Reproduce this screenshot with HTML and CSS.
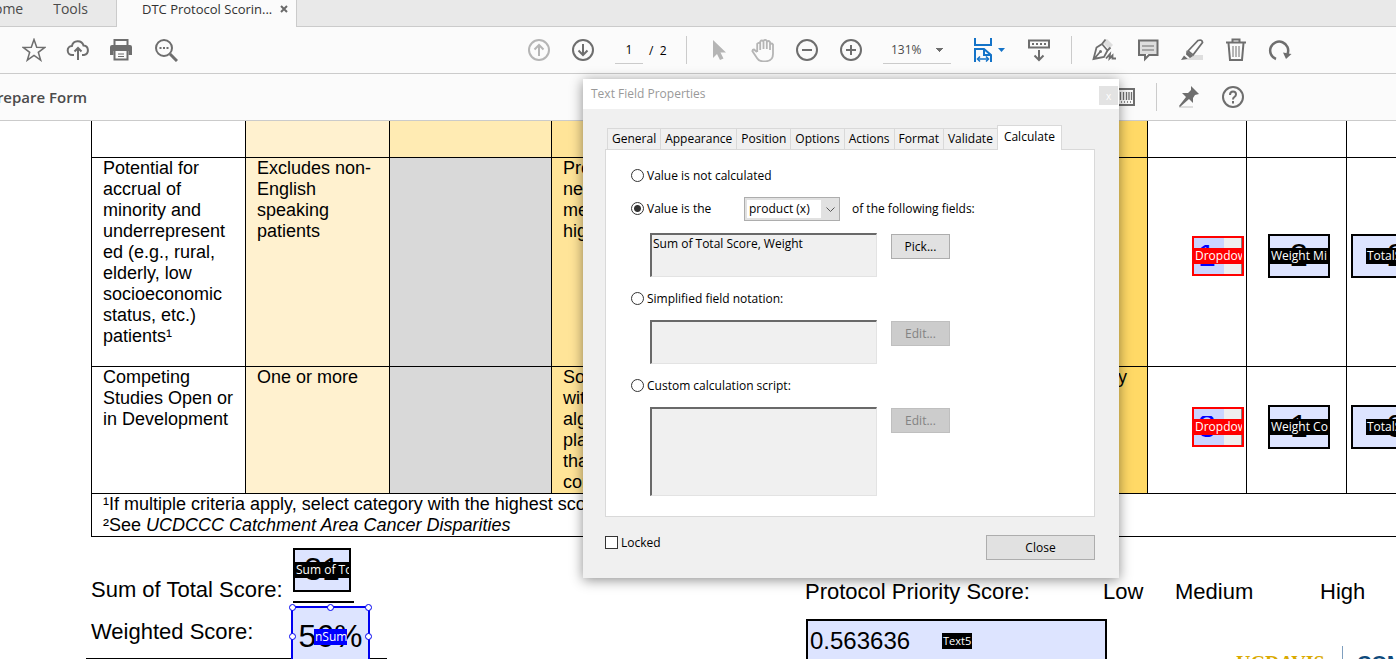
FILE: index.html
```html
<!DOCTYPE html>
<html lang="en">
<head>
  <meta charset="UTF-8">
  <meta name="viewport" content="width=device-width, initial-scale=1.0">
  <title>DTC Protocol Scoring</title>
  <link rel="stylesheet" href="styles.css">
</head>
<body>
  <header class="tab-bar">
    <nav class="main-nav">
      <a href="#">Home</a>
      <a href="#">Tools</a>
    </nav>
    <div class="doc-tab">
      <span>DTC Protocol Scorin...</span>
      <button class="tab-close" aria-label="Close tab">
        <svg width="8" height="8" viewBox="0 0 8 8"><path d="M1 1l6 6M7 1L1 7" stroke="#6a6a6a" stroke-width="2"/></svg>
      </button>
    </div>
    <div class="tab-rest"></div>
  </header>

  <div class="toolbar">
    <div class="tool-group">
      <button class="tool" aria-label="Star">
        <svg class="icon" viewBox="0 0 24 24"><path d="M12 1.5l2.7 7.7 8.1.2-6.5 4.9 2.4 7.9-6.7-4.7-6.7 4.7 2.4-7.9-6.5-4.9 8.1-.2z"/></svg>
      </button>
      <button class="tool" aria-label="Upload">
        <svg class="icon thick" viewBox="0 0 24 24"><path d="M8 17H6.500a4.500 4.500 0 0 1-.6-9A6 6 0 0 1 17.500 7.500 4.800 4.800 0 0 1 18 17h-2M12 22V10M8.500 13.500L12 10l3.500 3.500"/></svg>
      </button>
      <button class="tool" aria-label="Print">
        <svg class="icon" viewBox="0 0 24 24"><path d="M4.500 7V2h13v5" stroke-width="2"/><path class="solid" d="M0 9q0-2 2-2h18q2 0 2 2v8h-3.500v-4h-15v4H0z"/><path d="M4.500 13v8.500h13V13" stroke-width="2"/><path d="M8 16h6M8 18.500h6" stroke-width="1"/></svg>
      </button>
      <button class="tool" aria-label="Find">
        <svg class="icon thick" viewBox="0 0 24 24"><circle cx="10" cy="10" r="8"/><path d="M16 16l7 7" stroke-width="3"/><path d="M5.500 10h2M9 10h2M12.500 10h2"/></svg>
      </button>
    </div>

    <div class="tool-group">
      <button class="tool" aria-label="Previous page" disabled>
        <svg class="icon thick" viewBox="0 0 24 24"><circle cx="12" cy="12" r="10"/><path d="M12 18V7M7.500 11.500L12 7l4.500 4.500"/></svg>
      </button>
      <button class="tool" aria-label="Next page">
        <svg class="icon thick" viewBox="0 0 24 24"><circle cx="12" cy="12" r="10"/><path d="M12 6v11M7.500 12.500L12 17l4.500-4.500"/></svg>
      </button>
      <input class="page-input" type="text" value="1" aria-label="Page number">
      <span class="page-count">/&nbsp; 2</span>
      <span class="divider"></span>
      <button class="tool" aria-label="Select" disabled>
        <svg class="icon" viewBox="0 0 24 24"><path class="solid" d="M6 2v18l4-4 3 6 3.500-1.500-3-6H19z"/></svg>
      </button>
      <button class="tool" aria-label="Hand" disabled>
        <svg class="icon" viewBox="0 0 24 24"><path stroke-width="1.800" d="M6 14L3 11.500Q1.500 11.500 1.300 13l5 7.500Q8 23.300 12 23.300h2.500Q22 23 22 16V6.500q-1.500-2-3 0V11M19 12V4q-1.600-2-3.200 0v7M15.800 11V2.800q-1.700-2-3.300 0V11M12.500 11V3.500q-1.700-2-3.300 0V12M9.200 5.500Q7.600 4 6.200 5.800V14"/></svg>
      </button>
      <button class="tool" aria-label="Zoom out">
        <svg class="icon thick" viewBox="0 0 24 24"><circle cx="12" cy="12" r="10"/><path d="M7 12h10"/></svg>
      </button>
      <button class="tool" aria-label="Zoom in">
        <svg class="icon thick" viewBox="0 0 24 24"><circle cx="12" cy="12" r="10"/><path d="M7 12h10M12 7v10"/></svg>
      </button>
      <select class="zoom-select" aria-label="Zoom level">
        <option>131%</option>
      </select>
      <button class="tool fit" aria-label="Fit width">
        <svg width="32" height="26" viewBox="0 0 32 26"><g fill="none" stroke="#1473c8" stroke-width="2"><path d="M2 1v7h16V1M2 25V12h9l7 6v7M11 12v6h7"/><path d="M5 22h10" stroke-width="1.500"/><path d="M7 19.500L4.500 22 7 24.500M13 19.500l2.500 2.500-2.500 2.500" stroke-width="1.500"/></g><path d="M25 11h7l-3.500 4z" fill="#1473c8"/></svg>
      </button>
      <button class="tool" aria-label="Scrolling">
        <svg class="icon thick" viewBox="0 0 24 24"><path d="M2 2.500h20v7H2zM12 12v10M7.500 17.500L12 22l4.500-4.500"/><path d="M5 6h2M9 6h2M13 6h2M17 6h2"/></svg>
      </button>
      <span class="divider"></span>
      <button class="tool" aria-label="Sign">
        <svg class="icon" viewBox="0 0 24 24"><path class="pale" d="M13 2l2-1 6 6-4 4-5-5z"/><path stroke-width="1.800" d="M13.500 1.500L10 6 4.500 9.500 1.500 21 12 19l3.500-6.500L10 6M2 21l6-7M15.500 12.500l3-3"/><circle class="solid" cx="8.500" cy="13.500" r="1.500"/><path stroke-width="1.800" d="M14 20.500l4-4.500-.5 4.500 3-3v3H24"/></svg>
      </button>
      <button class="tool" aria-label="Comment">
        <svg class="icon thick" viewBox="0 0 24 24"><path class="pale" d="M3 3h18v13H3z"/><path d="M3 2.500h18.500V17H13l-4 4v-4H3z"/><path d="M6 8h12M6 12h12" stroke-width="1"/></svg>
      </button>
      <button class="tool" aria-label="Highlight">
        <svg class="icon" viewBox="0 0 24 24"><path class="pale" d="M11 17h12v5H7z"/><path stroke-width="1.800" d="M8 13L18 2.500q4-1.500 4.500 2L13 17z"/><path class="solid" d="M6.500 12.500l6.500 5.500-3 2-4-3.500zM4 17.500l4 3.500-7 1z"/></svg>
      </button>
      <button class="tool" aria-label="Delete">
        <svg class="icon thick" viewBox="0 0 24 24"><path d="M2 4.500h20M8.500 4V1.500h7V4M4.500 5l1.500 17h12l1.500-17"/><path d="M9 8v11M12 8v11M15 8v11" stroke-width="1"/></svg>
      </button>
      <button class="tool" aria-label="Rotate">
        <svg class="icon" viewBox="0 0 24 24"><path stroke-width="2.500" d="M8 21A9 9 0 1 1 19.500 16"/><path class="solid" d="M15 14.500l8.500 1.500-5.500 5z"/></svg>
      </button>
    </div>
  </div>

  <div class="sub-bar">
    <h1 class="mode-title">Prepare Form</h1>
    <div class="tool-group">
      <button class="tool" aria-label="Barcode">
        <svg class="icon thick" viewBox="0 0 24 24"><path d="M1 4h21v16H1z"/><path d="M6 7v8M8.500 7v8M11.500 7v8M14.500 7v8M17 7v8M19.500 7v8M6 17h1M9 17h1M12 17h1M15 17h1M18 17h1" stroke-width="1.300"/></svg>
      </button>
      <span class="divider"></span>
      <button class="tool" aria-label="Pin">
        <svg class="icon" viewBox="0 0 24 24"><path class="pale" d="M2 21h14v2H2z"/><path class="solid" d="M14 1l8 8-4 1-2 3v5l-4-4-9 8-1-1 7-9-4-4h6l3-3z"/></svg>
      </button>
      <button class="tool" aria-label="Help">
        <svg class="icon thick" viewBox="0 0 24 24"><circle cx="12" cy="12" r="10"/><path d="M9 10q0-3.500 3-3.500t3 2.800q0 1.700-1.500 2.500T12 14.500M12 16v2.500"/></svg>
      </button>
    </div>
  </div>

  <main class="page">
    <table class="score-table">
      <colgroup>
        <col class="col-name"><col class="col-a"><col class="col-b"><col class="col-c"><col class="col-d"><col class="col-score"><col class="col-num"><col class="col-num">
      </colgroup>
      <tbody>
        <tr class="row-prev">
          <td></td>
          <td class="tint-1"></td>
          <td class="tint-2"></td>
          <td class="tint-3"></td>
          <td class="tint-4"></td>
          <td></td>
          <td></td>
          <td></td>
        </tr>
        <tr class="row-accrual">
          <td>Potential for<br>accrual of<br>minority and<br>underrepresent<br>ed (e.g., rural,<br>elderly, low<br>socioeconomic<br>status, etc.)<br>patients¹</td>
          <td class="tint-1">Excludes non-<br>English<br>speaking<br>patients</td>
          <td class="blank"></td>
          <td class="tint-3">Protocol<br>needs<br>met for<br>high</td>
          <td class="tint-4"></td>
          <td class="field-cell">
            <div class="field dropdown">
              <select aria-label="Dropdown minority"><option>1</option></select>
              <span class="tag">Dropdow</span>
            </div>
          </td>
          <td class="field-cell">
            <div class="field">
              <input type="text" value="2" aria-label="Weight Minority">
              <span class="tag">Weight Mi</span>
            </div>
          </td>
          <td class="field-cell">
            <div class="field total">
              <input type="text" value="2" aria-label="Total score minority">
              <span class="tag">TotalSc</span>
            </div>
          </td>
        </tr>
        <tr class="row-competing">
          <td>Competing<br>Studies Open or<br>in Development</td>
          <td class="tint-1">One or more</td>
          <td class="blank"></td>
          <td class="tint-3">Some<br>with<br>algorithm<br>plan<br>that<br>compete</td>
          <td class="tint-4 align-end">No competing study</td>
          <td class="field-cell">
            <div class="field dropdown">
              <select aria-label="Dropdown competing"><option>3</option></select>
              <span class="tag">Dropdow</span>
            </div>
          </td>
          <td class="field-cell">
            <div class="field">
              <input type="text" value="1" aria-label="Weight Competing">
              <span class="tag">Weight Co</span>
            </div>
          </td>
          <td class="field-cell">
            <div class="field total">
              <input type="text" value="3" aria-label="Total score competing">
              <span class="tag">TotalSc</span>
            </div>
          </td>
        </tr>
        <tr class="row-notes">
          <td colspan="8">¹If multiple criteria apply, select category with the highest score<br>²See <em>UCDCCC Catchment Area Cancer Disparities</em></td>
        </tr>
      </tbody>
    </table>

    <section class="summary">
      <div class="totals">
        <div class="total-row">
          <label for="sum-total">Sum of Total Score:</label>
          <div class="underline">
            <div class="field sum">
              <input type="text" id="sum-total" value="31">
              <span class="tag">Sum of To</span>
            </div>
          </div>
        </div>
        <div class="total-row weighted">
          <label for="weighted">Weighted Score:</label>
          <div class="field selected">
            <input type="text" id="weighted" value="56%">
            <span class="tag">nSum</span>
            <i class="handle tl"></i><i class="handle tc"></i><i class="handle tr"></i>
            <i class="handle ml"></i><i class="handle mr"></i>
          </div>
        </div>
      </div>

      <div class="priority">
        <div class="levels">
          <label for="priority">Protocol Priority Score:</label>
          <span class="low">Low</span>
          <span class="medium">Medium</span>
          <span>High</span>
        </div>
        <div class="priority-foot">
          <div class="field score">
            <input type="text" id="priority" value="0.563636">
            <span class="tag">Text5</span>
          </div>
          <div class="brand">
            <span class="brand-gold">UCDAVIS</span>
            <span class="brand-navy">COMPREHENSIVE</span>
          </div>
        </div>
      </div>
    </section>
  </main>

  <div class="dialog" role="dialog" aria-labelledby="dialog-title">
    <div class="dialog-head">
      <h2 id="dialog-title">Text Field Properties</h2>
      <button class="dialog-x" aria-label="Close dialog">x</button>
    </div>
    <div class="dialog-body">
      <div class="tabs" role="tablist">
        <button role="tab">General</button>
        <button role="tab">Appearance</button>
        <button role="tab">Position</button>
        <button role="tab">Options</button>
        <button role="tab">Actions</button>
        <button role="tab">Format</button>
        <button role="tab">Validate</button>
        <button role="tab" class="active" aria-selected="true">Calculate</button>
      </div>
      <div class="panel">
        <div class="option">
          <input type="radio" name="calc" id="calc-none">
          <label for="calc-none">Value is not calculated</label>
        </div>
        <div class="option">
          <input type="radio" name="calc" id="calc-value" checked>
          <label for="calc-value" class="value-label">Value is the</label>
          <div class="combo">
            <select id="operation">
              <option>product (x)</option>
            </select>
            <svg class="chevron" viewBox="0 0 9 6"><path d="M.5.5l4 4 4-4" fill="none" stroke="#555"/></svg>
          </div>
          <label for="operation">of the following fields:</label>
        </div>
        <div class="entry">
          <textarea aria-label="Fields" readonly>Sum of Total Score, Weight</textarea>
          <button class="btn">Pick...</button>
        </div>
        <div class="option">
          <input type="radio" name="calc" id="calc-simple">
          <label for="calc-simple">Simplified field notation:</label>
        </div>
        <div class="entry">
          <textarea aria-label="Simplified field notation" readonly></textarea>
          <button class="btn" disabled>Edit...</button>
        </div>
        <div class="option">
          <input type="radio" name="calc" id="calc-custom">
          <label for="calc-custom">Custom calculation script:</label>
        </div>
        <div class="entry script">
          <textarea aria-label="Custom calculation script" readonly></textarea>
          <button class="btn" disabled>Edit...</button>
        </div>
      </div>
      <div class="dialog-foot">
        <div class="locked">
          <input type="checkbox" id="locked">
          <label for="locked">Locked</label>
        </div>
        <button class="btn btn-close">Close</button>
      </div>
    </div>
  </div>
</body>
</html>
```
FILE: styles.css
```css
* {
  margin: 0;
  padding: 0;
  box-sizing: border-box;
}

body {
  height: 100vh;
  overflow: hidden;
  display: flex;
  flex-direction: column;
  position: relative;
  background: #fff;
  color: #000;
  font-family: "Open Sans", "Noto Sans", sans-serif;
  font-size: 12px;
}

button,
input,
select,
textarea {
  font: inherit;
  color: inherit;
  border: none;
  border-radius: 0;
  background: none;
  appearance: none;
  outline: none;
}

/* top tabs */
.tab-bar {
  display: flex;
  height: 27px;
  flex: none;
  font-size: 14px;
  color: #4b4b4b;
}

.main-nav {
  display: flex;
  justify-content: flex-end;
  gap: 30px;
  width: 116px;
  padding-right: 28px;
  overflow: hidden;
  background: #e9e9e9;
  border-bottom: 1px solid #cbcbcb;
}

.main-nav a {
  color: inherit;
  text-decoration: none;
  line-height: 18px;
}

.doc-tab {
  display: flex;
  justify-content: space-between;
  width: 181px;
  padding: 0 8px 0 25px;
  background: #fbfbfb;
  border-left: 1px solid #cbcbcb;
  border-right: 1px solid #cbcbcb;
  color: #323232;
  font-size: 13px;
  line-height: 18px;
  white-space: nowrap;
}

.tab-close {
  display: flex;
  align-items: center;
  height: 18px;
}

.tab-rest {
  flex: 1;
  background: #e9e9e9;
  border-bottom: 1px solid #cbcbcb;
}

/* toolbars */
.toolbar,
.sub-bar {
  display: flex;
  justify-content: space-between;
  align-items: center;
  height: 47px;
  flex: none;
  background: #fbfbfb;
  border-bottom: 1px solid #cbcbcb;
}

.toolbar {
  padding: 0 94px 0 12px;
}

.sub-bar {
  padding-right: 141px;
}

.tool-group {
  display: flex;
  align-items: center;
}

.tool {
  display: flex;
  align-items: center;
  justify-content: center;
  width: 44px;
  height: 44px;
  color: #6e6e6e;
}

.tool:disabled {
  color: #b5b5b5;
}

.icon {
  width: 24px;
  height: 24px;
  fill: none;
  stroke: currentColor;
  stroke-width: 1.5;
}

.icon.thick {
  stroke-width: 2;
}

.icon .solid {
  fill: currentColor;
  stroke: none;
}

.icon .pale {
  fill: #dedede;
  stroke: none;
}

.page-input {
  width: 28px;
  height: 28px;
  margin: 0 6px 0 10px;
  border-bottom: 1px solid #cbcbcb;
  text-align: center;
}

.page-count {
  width: 18px;
  white-space: nowrap;
}

.divider {
  width: 1px;
  height: 28px;
  margin: 0 10px;
  background: #cbcbcb;
}

.page-count + .divider {
  margin-left: 19px;
}

.zoom-select {
  width: 68px;
  height: 28px;
  margin: 0 10px;
  padding-left: 8px;
  color: #4b4b4b;
  border-bottom: 1px solid #cbcbcb;
  background: conic-gradient(from -45deg at 50% 100%, #6e6e6e 90deg, transparent 0) 52px 12px / 8px 4px no-repeat;
}

.tool.fit {
  width: 56px;
}

.mode-title {
  display: flex;
  justify-content: flex-end;
  width: 87px;
  font-size: 15px;
  font-weight: 600;
  color: #4b4b4b;
  white-space: nowrap;
}

/* document */
.page {
  flex: 1;
  min-height: 0;
  overflow: hidden;
  padding-left: 91px;
  font-family: "Liberation Sans", Arial, sans-serif;
}

.score-table {
  width: 1355px;
  table-layout: fixed;
  border-collapse: collapse;
  font-size: 18px;
  line-height: 21px;
}

.col-name { width: 154px; }
.col-a { width: 144px; }
.col-b { width: 162px; }
.col-c { width: 299px; }
.col-d { width: 297px; }
.col-score { width: 99px; }
.col-num { width: 100px; }

.score-table td {
  border: 1px solid #000;
  border-top: none;
  padding: 0 11px;
  vertical-align: top;
  white-space: nowrap;
}

.tint-1 { background: #fff1cf; }
.tint-2 { background: #ffebb3; }
.tint-3 { background: #ffe498; }
.tint-4 { background: #ffd966; }
.blank { background: #d9d9d9; }

.score-table .align-end {
  padding-right: 20px;
  text-align: right;
}

.row-prev { height: 36px; }
.row-accrual { height: 209px; }
.row-competing { height: 125px; }
.row-notes { height: 43px; }

.score-table .field-cell {
  padding: 0 15px 12px 21px;
  vertical-align: middle;
}

.row-competing .field-cell {
  padding-bottom: 6px;
}

/* form fields with their name tags */
.field {
  position: relative;
  width: 62px;
  height: 44px;
  border: 2px solid #000;
  background: #dde4ff;
}

.field input,
.field select {
  display: block;
  width: 100%;
  height: 100%;
  font-family: "Liberation Sans", Arial, sans-serif;
  font-size: 32px;
  text-align: center;
}

.tag {
  position: absolute;
  top: 12px;
  left: 0;
  right: 0;
  height: 16px;
  padding-left: 1px;
  overflow: hidden;
  background: #000;
  color: #fff;
  font-family: "Open Sans", "Noto Sans", sans-serif;
  font-size: 12px;
  line-height: 16px;
  white-space: nowrap;
}

.field.dropdown {
  width: 52px;
  height: 40px;
  margin-left: 23px;
  border-color: #f00;
  background: #cad5ff;
}

.dropdown select {
  padding-left: 4px;
  color: #00f;
  text-align: left;
  background: linear-gradient(#efefef, #efefef) right / 17px 100% no-repeat;
  border-right: 1px solid #808080;
}

.dropdown .tag {
  top: 10px;
  background: #f00;
}

.field.total {
  width: 90px;
  margin-left: -17px;
}

.total .tag {
  left: 13px;
  right: 13px;
}

/* totals under the table */
.summary {
  display: flex;
  justify-content: space-between;
  font-size: 22px;
  line-height: 26px;
}

.totals {
  width: 301px;
  margin-left: -5px;
  padding-top: 11px;
}

.total-row {
  display: flex;
  justify-content: space-between;
  height: 55px;
  padding: 0 33px 0 5px;
}

.total-row label {
  align-self: flex-end;
}

.underline {
  width: 61px;
  border-bottom: 2px solid #000;
}

.field.sum {
  width: 58px;
}

.total-row.weighted {
  height: 54px;
  margin-top: 3px;
  padding-right: 17px;
  border-bottom: 2px solid #000;
}

.weighted label {
  align-self: center;
}

.field.selected {
  width: 79px;
  height: 62px;
  border-color: #0000f0;
}

.selected .tag {
  top: 21px;
  left: 21px;
  right: 21px;
  background: #00f;
}

.handle {
  position: absolute;
  width: 7px;
  height: 7px;
  border: 1px solid #0000f0;
  border-radius: 50%;
  background: #fff;
}

.tl { top: -4px; left: -4px; }
.tc { top: -4px; left: 34px; }
.tr { top: -4px; right: -4px; }
.ml { top: 25px; left: -4px; }
.mr { top: 25px; right: -4px; }

.priority {
  width: 591px;
  padding-top: 42px;
}

.levels {
  display: flex;
}

.levels > * {
  flex: none;
}

.levels label {
  width: 298px;
}

.low {
  width: 72px;
}

.medium {
  width: 145px;
}

.priority-foot {
  display: flex;
  gap: 129px;
  margin-top: 14px;
  padding-left: 1px;
}

.field.score {
  width: 301px;
  flex: none;
}

.score input {
  padding-left: 2px;
  font-size: 24px;
  text-align: left;
}

.score .tag {
  left: 134px;
  right: auto;
  padding: 0 1px;
  font-size: 11px;
}

.brand {
  display: flex;
  margin-top: 27px;
  font-size: 20px;
  font-weight: 700;
  line-height: 34px;
}

.brand-gold {
  width: 107px;
  flex: none;
  border-right: 1px solid #7f9fbf;
  color: #daaa00;
  font-family: "Liberation Serif", "Times New Roman", serif;
}

.brand-navy {
  padding-left: 14px;
  color: #0f4a7c;
}

/* dialog */
.dialog {
  position: absolute;
  top: 79px;
  left: 583px;
  width: 536px;
  background: #f0f0f0;
  box-shadow: 0 2px 12px rgba(0, 0, 0, 0.45);
}

.dialog-head {
  display: flex;
  justify-content: space-between;
  align-items: center;
  height: 30px;
  padding: 0 1px 0 8px;
  background: #fff;
}

.dialog-head h2 {
  padding-bottom: 1px;
  font-size: 12px;
  font-weight: 400;
  color: #999;
}

.dialog-x {
  width: 19px;
  height: 19px;
  margin-top: 3px;
  background: #e3e3e3;
  color: #fff;
  font-size: 10px;
}

.dialog-body {
  padding: 16px 24px 18px 22px;
}

.tabs {
  display: flex;
  align-items: flex-end;
  padding-left: 2px;
}

.tabs button {
  height: 21px;
  padding: 0 4px;
  border: 1px solid #d9d9d9;
  border-width: 1px 0 0 1px;
  line-height: 18px;
}

.tabs .active {
  position: relative;
  height: 25px;
  margin-bottom: -1px;
  padding: 0 6px 3px;
  border-right-width: 1px;
  background: #fff;
}

.panel {
  padding: 14px 25px 20px;
  border: 1px solid #d9d9d9;
  background: #fff;
}

.option {
  display: flex;
  align-items: center;
  height: 24px;
}

.option + .option {
  margin-top: 9px;
}

.option label {
  padding-bottom: 2px;
}

.option input,
.locked input {
  width: 13px;
  height: 13px;
  margin: 0 3px 2px 0;
  border: 1px solid #333;
  background: #fff;
}

.option input {
  border-radius: 50%;
}

.option input:checked {
  background: radial-gradient(#333 0 3px, #fff 4px);
}

.locked label {
  padding-bottom: 2px;
}

.value-label {
  width: 97px;
}

.combo {
  position: relative;
  width: 96px;
  height: 24px;
  margin-right: 12px;
}

.combo select {
  width: 100%;
  height: 100%;
  padding: 0 0 2px 4px;
  border: 1px solid #adadad;
  background: linear-gradient(#fff, #fff) 2px 2px / 74px 18px no-repeat, #e1e1e1;
}

.chevron {
  position: absolute;
  top: 10px;
  right: 5px;
  width: 9px;
  height: 6px;
  pointer-events: none;
}

.entry {
  display: flex;
  align-items: flex-start;
  gap: 14px;
  margin: 9px 0 10px 19px;
}

.option + .option + .entry {
  margin-top: 12px;
}

.entry.script {
  margin-bottom: 0;
}

.entry textarea {
  width: 227px;
  height: 44px;
  padding: 1px;
  border: 1px solid #e3e3e3;
  border-top: 2px solid #696969;
  border-left: 2px solid #696969;
  background: #f0f0f0;
  line-height: 16px;
  resize: none;
}

.entry.script textarea {
  height: 89px;
}

.btn {
  width: 59px;
  height: 25px;
  margin-top: 1px;
  border: 1px solid #adadad;
  background: #e1e1e1;
}

.btn:disabled {
  border-color: #bfbfbf;
  background: #ccc;
  color: #838383;
}

.dialog-foot {
  display: flex;
  justify-content: space-between;
  align-items: flex-start;
  padding-top: 17px;
}

.locked {
  display: flex;
  align-items: center;
  height: 18px;
}

.btn-close {
  width: 109px;
}
```
